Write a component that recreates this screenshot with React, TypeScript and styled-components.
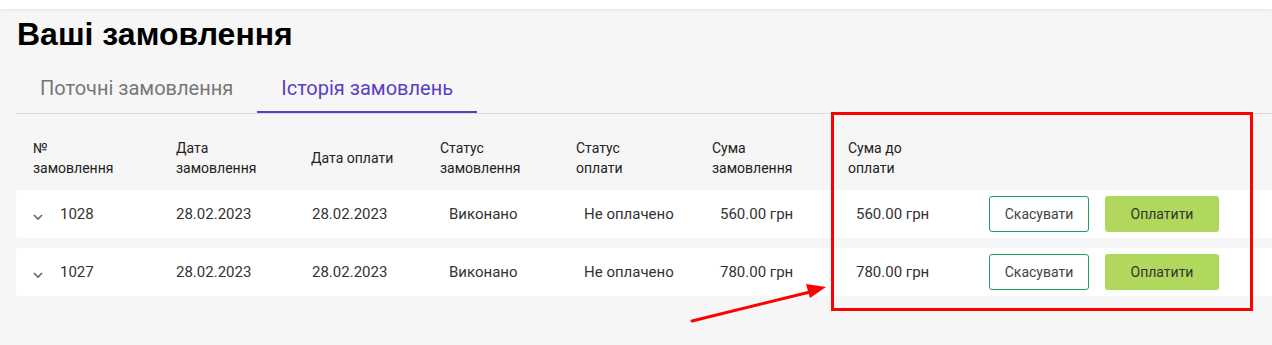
import React from 'react'
import styled, { createGlobalStyle } from 'styled-components'

const GlobalStyle = createGlobalStyle`
  html, body {
    margin: 0;
    padding: 0;
    background: #f6f6f6;
    font-family: Roboto, 'Noto Sans', sans-serif;
    overflow: hidden;
  }
`

const Page = styled.div`
  position: relative;
  width: 1272px;
  height: 345px;
  background: #f6f6f6;
`

const TopBar = styled.div`
  height: 9px;
  background: #fff;
  box-shadow: 0 1px 4px rgba(0, 0, 0, 0.08);
`

const Content = styled.div`
  padding-left: 16px;
`

const Title = styled.h1`
  margin: 0;
  padding: 5px 0 0 1px;
  font-family: 'Liberation Sans', Arial, sans-serif;
  font-weight: 700;
  font-size: 32px;
  line-height: 40px;
  color: #000;
`

const Tabs = styled.div`
  display: flex;
  margin-top: 14px;
  border-bottom: 1px solid #dcdcdc;
`

const Tab = styled.div<{ $active?: boolean }>`
  box-sizing: border-box;
  height: 45px;
  padding: 8px 24px 0;
  font-size: 20px;
  line-height: 24px;
  color: ${({ $active }) => ($active ? '#5b3fc3' : '#777')};
  border-bottom: 2px solid ${({ $active }) => ($active ? '#5b3fc3' : 'transparent')};
`

const cols = '143px 135px 129px 136px 136px 136px 142px 116px 1fr'

const HeaderRow = styled.div`
  box-sizing: border-box;
  display: grid;
  grid-template-columns: ${cols};
  align-items: center;
  height: 76px;
  padding: 12px 0 0 17px;
  font-size: 14px;
  line-height: 20px;
  color: #222;
`

const Row = styled.div`
  display: grid;
  grid-template-columns: ${cols};
  align-items: center;
  height: 48px;
  background: #fff;
  border-radius: 4px 0 0 4px;
  margin-bottom: 10px;
  font-size: 15px;
  color: #333;
  padding-left: 16px;
`

const IdCell = styled.div`
  display: flex;
  align-items: center;
  gap: 16px;
`

const Chevron = styled.svg`
  width: 12px;
  height: 12px;
  margin-top: 6px;
  flex-shrink: 0;
`

const Cell = styled.div<{ $pad?: number }>`
  padding-left: ${({ $pad }) => $pad ?? 0}px;
`

const OutlineButton = styled.button`
  width: 100px;
  height: 36px;
  border: 1px solid #1f9f59;
  border-radius: 3px;
  background: #fff;
  color: #444;
  font-family: inherit;
  font-size: 14px;
`

const PayButton = styled.button`
  width: 114px;
  height: 36px;
  border: none;
  border-radius: 3px;
  background: #b0d85c;
  color: #333;
  font-family: inherit;
  font-size: 14px;
`

const Annotation = styled.svg`
  position: absolute;
  left: 0;
  top: 0;
  pointer-events: none;
`

const orders = [
  { id: '1028', date: '28.02.2023', paid: '28.02.2023', status: 'Виконано', pay: 'Не оплачено', sum: '560.00 грн', due: '560.00 грн' },
  { id: '1027', date: '28.02.2023', paid: '28.02.2023', status: 'Виконано', pay: 'Не оплачено', sum: '780.00 грн', due: '780.00 грн' },
]

const App = () => (
  <Page>
    <GlobalStyle />
    <TopBar />
    <Content>
      <Title>Ваші замовлення</Title>
      <Tabs>
        <Tab>Поточні замовлення</Tab>
        <Tab $active>Історія замовлень</Tab>
      </Tabs>
      <HeaderRow>
        <div>№<br />замовлення</div>
        <div>Дата<br />замовлення</div>
        <div>Дата оплати</div>
        <div>Статус<br />замовлення</div>
        <div>Статус<br />оплати</div>
        <div>Сума<br />замовлення</div>
        <div>Сума до<br />оплати</div>
        <div />
        <div />
      </HeaderRow>
      {orders.map((o) => (
        <Row key={o.id}>
          <IdCell>
            <Chevron viewBox="0 0 12 12">
              <path d="M2 4l4 4 4-4" fill="none" stroke="#666" strokeWidth="1.6" />
            </Chevron>
            {o.id}
          </IdCell>
          <Cell $pad={1}>{o.date}</Cell>
          <Cell $pad={2}>{o.paid}</Cell>
          <Cell $pad={10}>{o.status}</Cell>
          <Cell $pad={9}>{o.pay}</Cell>
          <Cell $pad={9}>{o.sum}</Cell>
          <Cell $pad={9}>{o.due}</Cell>
          <Cell>
            <OutlineButton>Скасувати</OutlineButton>
          </Cell>
          <Cell>
            <PayButton>Оплатити</PayButton>
          </Cell>
        </Row>
      ))}
    </Content>
    <Annotation width="1272" height="345" viewBox="0 0 1272 345">
      <rect x="832.5" y="113.5" width="419" height="196" fill="none" stroke="#f00" strokeWidth="3" />
      <line x1="692" y1="321" x2="810" y2="292" stroke="#f00" strokeWidth="3" strokeLinecap="round" />
      <polygon points="826,287 806,284 810,298" fill="#f00" />
    </Annotation>
  </Page>
)

export default App
